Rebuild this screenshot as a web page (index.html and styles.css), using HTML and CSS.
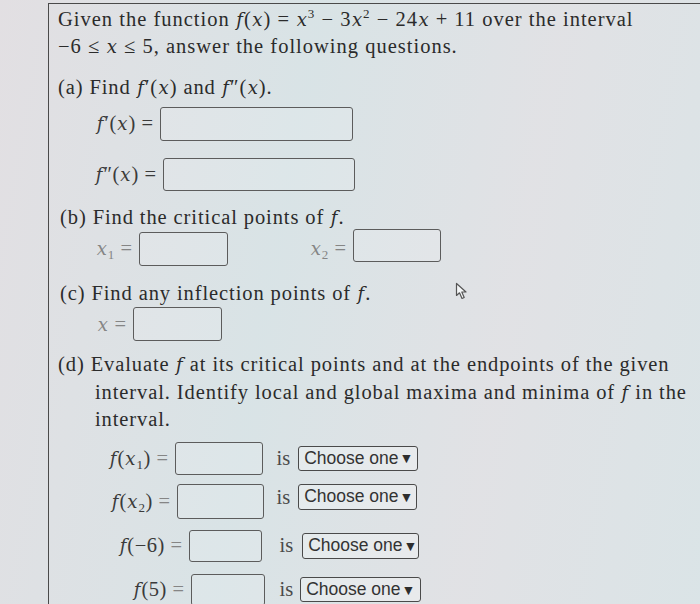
FILE: index.html
```html
<!DOCTYPE html>
<html>
<head>
<meta charset="utf-8">
<link rel="stylesheet" href="styles.css">
</head>
<body>
<div class="frame">
  <p class="intro">Given the function <i>f</i>(<i>x</i>) = <i>x</i><sup>3</sup> − 3<i>x</i><sup>2</sup> − 24<i>x</i> + 11 over the interval<br>−6 ≤ <i>x</i> ≤ 5, answer the following questions.</p>

  <p class="head head-a">(a) Find <i>f</i>′(<i>x</i>) and <i>f</i>″(<i>x</i>).</p>
  <div class="row row-fp">
    <span class="lbl lbl-fp"><i>f</i>′(<i>x</i>) =</span>
    <span class="box box-fp"></span>
  </div>
  <div class="row row-fpp">
    <span class="lbl lbl-fpp"><i>f</i>″(<i>x</i>) =</span>
    <span class="box box-fpp"></span>
  </div>

  <p class="head head-b">(b) Find the critical points of <i>f</i>.</p>
  <div class="row row-crit">
    <span class="lbl lbl-x1 faded"><i>x</i><sub>1</sub> =</span>
    <span class="box box-x1"></span>
    <span class="lbl lbl-x2 faded"><i>x</i><sub>2</sub> =</span>
    <span class="box box-x2"></span>
  </div>

  <p class="head head-c">(c) Find any inflection points of <i>f</i>.</p>
  <div class="row row-infl">
    <span class="lbl lbl-x faded"><i>x</i> =</span>
    <span class="box box-x"></span>
  </div>

  <p class="head head-d">(d) Evaluate <i>f</i> at its critical points and at the endpoints of the given interval. Identify local and global maxima and minima of <i>f</i> in the interval.</p>

  <div class="row row-e1">
    <span class="lbl lbl-e1"><i>f</i>(<i>x</i><sub>1</sub>) <span class="faded">=</span></span>
    <span class="box box-e1"></span>
    <span class="is is-e1">is</span>
    <span class="select sel-e1">Choose one<span class="tri">▼</span></span>
  </div>
  <div class="row row-e2">
    <span class="lbl lbl-e2"><i>f</i>(<i>x</i><sub>2</sub>) <span class="faded">=</span></span>
    <span class="box box-e2"></span>
    <span class="is is-e2">is</span>
    <span class="select sel-e2">Choose one<span class="tri">▼</span></span>
  </div>
  <div class="row row-e3">
    <span class="lbl lbl-e3"><i>f</i>(−6) <span class="faded">=</span></span>
    <span class="box box-e3"></span>
    <span class="is is-e3">is</span>
    <span class="select sel-e3">Choose one<span class="tri">▼</span></span>
  </div>
  <div class="row row-e4">
    <span class="lbl lbl-e4"><i>f</i>(5) <span class="faded">=</span></span>
    <span class="box box-e4"></span>
    <span class="is is-e4">is</span>
    <span class="select sel-e4">Choose one<span class="tri">▼</span></span>
  </div>

  <svg class="cursor" width="14" height="18" viewBox="0 0 14 18">
    <path d="M1.5 1.5 L1.5 13.5 L4.5 10.8 L7 16.5 L9.2 15.5 L6.8 10 L11 10 Z" fill="#f4f6f7" stroke="#555" stroke-width="1.2" stroke-linejoin="round"/>
  </svg>
</div>
</body>
</html>
```

FILE: styles.css
```css
html, body {
  margin: 0;
  padding: 0;
  height: 100%;
  overflow: hidden;
}
body {
  background-color: #dfe4e6;
  background-image:
    linear-gradient(100deg, rgba(232, 214, 220, 0.35), rgba(205, 226, 230, 0.35) 40%, rgba(230, 220, 226, 0.3) 70%, rgba(210, 228, 232, 0.35));
  font-family: "Liberation Serif", "Times New Roman", serif;
  font-size: 20.5px;
  color: #2b2b2b;
}
.frame {
  position: relative;
  margin: 3px 0 0 48px;
  height: 620px;
  border-left: 1.5px solid #4a4a4a;
  border-top: 1.5px solid #4a4a4a;
  padding-left: 9px;
  box-sizing: border-box;
}
p { margin: 0; }
i {
  font-family: "DejaVu Serif", "Liberation Serif", serif;
  font-style: italic;
  font-size: 0.88em;
  letter-spacing: 0;
  margin: 0 1px 0 0.5px;
}
sup { font-size: 13px; vertical-align: 8px; line-height: 0; }
sub { font-size: 13px; vertical-align: -4px; line-height: 0; }

.intro {
  padding-top: 2px;
  line-height: 27px;
  letter-spacing: 1px;
}
.head {
  line-height: 27px;
  letter-spacing: 0.9px;
}
.head-a { margin-top: 14px; }
.head-b { margin-top: 13px; padding-left: 2px; }
.head-c { margin-top: 14px; padding-left: 2px; }
.head-d {
  margin-top: 10px;
  line-height: 27.5px;
  padding-left: 37px;
  text-indent: -37px;
  padding-right: 8px;
}

.row {
  display: flex;
  align-items: center;
}
.lbl {
  text-align: right;
  padding-right: 6px;
  box-sizing: border-box;
  white-space: nowrap;
  color: #3a3a3a;
  letter-spacing: 0.5px;
}
.faded { color: #858585; }
.box {
  display: block;
  box-sizing: border-box;
  border: 1.5px solid #5c5c5c;
  border-radius: 3px;
  background: rgba(255, 255, 255, 0.12);
}

.row-fp { margin-top: 5.5px; height: 34px; }
.lbl-fp { width: 101.5px; }
.box-fp { width: 193px; height: 34px; }

.row-fpp { margin-top: 17.5px; height: 33px; }
.lbl-fpp { width: 104.5px; }
.box-fpp { width: 192px; height: 33px; }

.row-crit { margin-top: 0; height: 35px; }
.lbl-x1 { width: 80.5px; }
.box-x1 { width: 89px; height: 34px; }
.lbl-x2 { width: 125px; }
.box-x2 { width: 88px; height: 33px; margin-top: -6px; }

.row-infl { margin-top: 0; height: 34px; }
.lbl-x { width: 74.5px; }
.box-x { width: 89px; height: 34px; }

.row-e1 { margin-top: 8px; height: 33px; }
.row-e2 { margin-top: 9px; height: 35px; }
.row-e3 { margin-top: 11px; height: 32px; }
.row-e4 { margin-top: 12px; height: 32px; }

.lbl-e1 { width: 116.5px; }
.lbl-e2 { width: 118.5px; }
.lbl-e3 { width: 130.5px; }
.lbl-e4 { width: 132.5px; }

.box-e1 { width: 88px; height: 33px; }
.box-e2 { width: 87px; height: 35px; }
.box-e3 { width: 73px; height: 32px; }
.box-e4 { width: 74px; height: 32px; }

.is { color: #4a4a4a; }
.is-e1 { margin-left: 14px; margin-right: 8px; }
.is-e2 { margin-left: 13px; margin-right: 8px; align-self: flex-start; margin-top: 2px; }
.is-e3 { margin-left: 18px; margin-right: 9px; }
.is-e4 { margin-left: 15px; margin-right: 7px; }

.select {
  display: flex;
  align-items: center;
  box-sizing: border-box;
  height: 25px;
  padding: 0 3px 0 5px;
  border: 1.5px solid #4a4a4a;
  border-radius: 3px;
  background: rgba(255, 255, 255, 0.28);
  font-family: "Liberation Sans", Arial, sans-serif;
  font-size: 17.5px;
  color: #333;
  white-space: nowrap;
}
.sel-e1 { width: 120px; }
.sel-e2 { width: 119px; height: 26px; align-self: flex-start; }
.sel-e3 { width: 117px; height: 26px; }
.sel-e4 { width: 121px; }
.tri {
  font-size: 14px;
  margin-left: 1px;
  color: #2e2e2e;
}

.cursor {
  position: absolute;
  left: 406px;
  top: 278px;
}
```
